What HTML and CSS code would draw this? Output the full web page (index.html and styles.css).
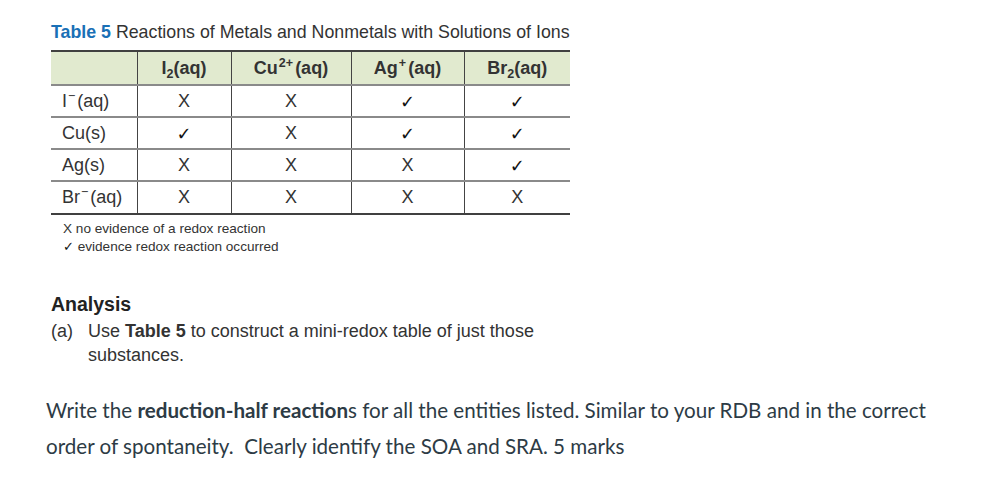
FILE: index.html
```html
<!DOCTYPE html>
<html>
<head>
<meta charset="utf-8">
<link rel="stylesheet" href="styles.css">
</head>
<body>
<div class="page">
  <div class="figure">
    <div class="caption"><span class="tlabel">Table 5</span> Reactions of Metals and Nonmetals with Solutions of Ions</div>
    <table class="tbl">
      <colgroup>
        <col class="c0"><col class="c1"><col class="c2"><col class="c3"><col class="c4">
      </colgroup>
      <thead>
        <tr>
          <th></th>
          <th>I<sub>2</sub>(aq)</th>
          <th>Cu<sup>2+</sup>(aq)</th>
          <th>Ag<sup>+</sup>(aq)</th>
          <th>Br<sub>2</sub>(aq)</th>
        </tr>
      </thead>
      <tbody>
        <tr><td class="lbl">I<sup>&minus;</sup>(aq)</td><td>X</td><td>X</td><td class="ck">&#10003;</td><td class="ck">&#10003;</td></tr>
        <tr><td class="lbl">Cu(s)</td><td class="ck">&#10003;</td><td>X</td><td class="ck">&#10003;</td><td class="ck">&#10003;</td></tr>
        <tr><td class="lbl">Ag(s)</td><td>X</td><td>X</td><td>X</td><td class="ck">&#10003;</td></tr>
        <tr><td class="lbl">Br<sup>&minus;</sup>(aq)</td><td>X</td><td>X</td><td>X</td><td>X</td></tr>
      </tbody>
    </table>
    <div class="legend">
      <div>X no evidence of a redox reaction</div>
      <div><span class="lck">&#10003;</span> evidence redox reaction occurred</div>
    </div>
    <div class="analysis">
      <div class="ahead">Analysis</div>
      <div class="item"><span class="num">(a)</span><span class="itext">Use <b>Table 5</b> to construct a mini-redox table of just those substances.</span></div>
    </div>
  </div>
  <p class="question">Write the <b>reduction-half reaction</b>s for all the entities listed. Similar to your RDB and in the correct order of spontaneity.&nbsp; Clearly identify the SOA and SRA. 5 marks</p>
</div>
</body>
</html>
```
FILE: styles.css
```css
html, body { margin: 0; padding: 0; background: #fff; }
.page { padding: 0; }
.figure {
  padding: 21px 0 0 51px;
  font-family: "Liberation Sans", Arial, sans-serif;
  color: #2a2a2a;
}
.caption {
  font-size: 17.8px;
  letter-spacing: 0;
  color: #333;
  line-height: 22px;
  height: 29px;
  white-space: nowrap;
}
.tlabel { color: #1a70b6; font-weight: bold; }
.tbl {
  border-collapse: collapse;
  width: 519px;
  table-layout: fixed;
  border-top: 2px solid #404040;
  border-bottom: 2px solid #404040;
}
.c0 { width: 86px; } .c1 { width: 94px; } .c2 { width: 120px; } .c3 { width: 113px; } .c4 { width: 106px; }
.tbl th {
  background: #e1eacf;
  height: 32px;
  padding: 0;
  font-size: 18px;
  font-weight: bold;
  color: #333;
  text-align: center;
  border-left: 1px solid #444;
  border-bottom: 2px solid #8a8a8a;
}
.tbl th:first-child, .tbl td:first-child { border-left: none; }
.tbl td {
  height: 30px;
  padding: 0;
  font-size: 18px;
  text-align: center;
  color: #333;
  border-left: 1px solid #444;
  border-bottom: 2px solid #8a8a8a;
}
.tbl tbody tr:last-child td { border-bottom: none; height: 31px; }
.tbl td.lbl { text-align: left; padding-left: 11px; }
.tbl td.ck { font-size: 18px; font-family: "DejaVu Sans", sans-serif; color: #111; }
.tbl sub, .tbl sup { font-size: 12.5px; line-height: 0; }
.tbl sub { vertical-align: -4px; }
.tbl sup { vertical-align: 7px; margin: 0 2px 0 1px; }
.legend {
  padding: 5px 0 0 12px;
  font-size: 13.6px;
  line-height: 18px;
  color: #333;
}
.lck { font-family: "DejaVu Sans", sans-serif; font-size: 13px; color: #111; }
.analysis { padding-top: 36px; }
.ahead {
  font-size: 19.5px;
  font-weight: bold;
  color: #222;
  line-height: 24px;
}
.item {
  display: flex;
  margin-top: 3px;
  font-size: 18px;
  line-height: 24px;
  color: #333;
  width: 500px;
}
.num { width: 37px; flex: none; }
.itext { flex: 1; }
.question {
  margin: 25px 0 0 46px;
  width: 890px;
  font-family: Lato, "Liberation Sans", sans-serif;
  font-size: 20.6px;
  line-height: 36px;
  color: #2d3b45;
}
.question b { font-weight: bold; }
```
